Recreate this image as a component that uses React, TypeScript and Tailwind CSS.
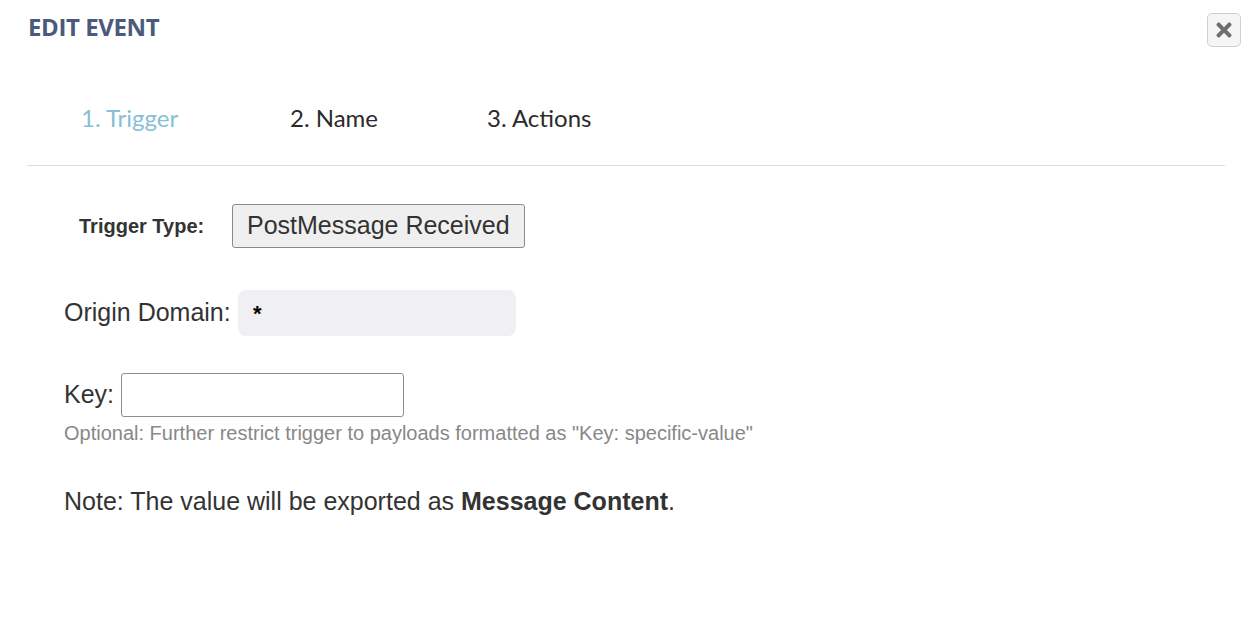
import { FaTimes } from "react-icons/fa";

export default function App() {
  return (
    <div className="w-[1252px] h-[630px] bg-white text-[#333] font-['Liberation_Sans',Arial,sans-serif]">
      {/* Header */}
      <div className="flex items-start justify-between pl-[28px] pr-[11px] pt-[13px]">
        <h1 className="mt-[0px] text-[24px] leading-[28px] font-bold text-[#4b5a7c] tracking-[-0.4px] font-['Open_Sans',sans-serif]">
          EDIT EVENT
        </h1>
        <button className="w-[34px] h-[34px] rounded-[5px] border border-[#cfcfcf] bg-[#f5f5f5] flex items-center justify-center text-[#6f6f6f]">
          <FaTimes className="text-[22px]" />
        </button>
      </div>

      {/* Steps */}
      <div className="mx-[27px] mt-[55px] border-b border-[#dcdcdc] pb-[31px] font-['Lato',sans-serif] text-[24px] leading-[32px]">
        <div className="flex pl-[54px]">
          <span className="w-[209px] text-[#86bfd6]">1. Trigger</span>
          <span className="w-[197px] text-[#2b2b2b]">2. Name</span>
          <span className="text-[#2b2b2b]">3. Actions</span>
        </div>
      </div>

      {/* Form */}
      <div className="pl-[64px] pt-[38px]">
        <div className="flex items-center pl-[15px]">
          <span className="text-[20px] font-bold text-[#333] w-[153px]">Trigger Type:</span>
          <button className="h-[44px] px-[14px] border border-[#8a8a8a] rounded-[3px] bg-[#efefef] text-[25px] text-[#333]">
            PostMessage Received
          </button>
        </div>

        <div className="flex items-center mt-[42px]">
          <span className="text-[25px] w-[174px]">Origin Domain:</span>
          <div className="w-[278px] h-[46px] rounded-[8px] bg-[#f0f0f2] flex items-center pl-[15px] text-[22px] font-bold text-black">
            *
          </div>
        </div>

        <div className="flex items-center mt-[37px]">
          <span className="text-[25px] w-[57px]">Key:</span>
          <input className="w-[283px] h-[44px] border border-[#8f8f8f] rounded-[3px] bg-white" />
        </div>
        <p className="mt-[4px] text-[20px] leading-[24px] text-[#888]">
          Optional: Further restrict trigger to payloads formatted as "Key: specific-value"
        </p>

        <p className="mt-[41px] text-[25px] leading-[30px] text-[#333]">
          Note: The value will be exported as <b>Message Content</b>.
        </p>
      </div>
    </div>
  );
}
